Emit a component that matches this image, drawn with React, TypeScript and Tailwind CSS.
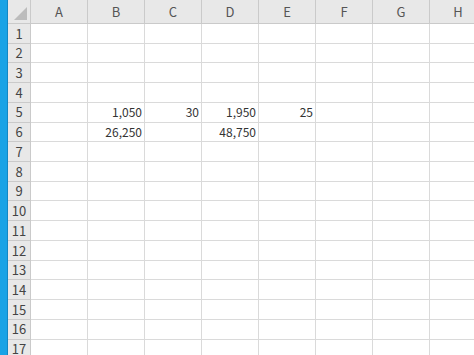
import React from "react";

const cols = ["A", "B", "C", "D", "E", "F", "G", "H"];
const data: Record<string, string> = {
  "5B": "1,050",
  "5C": "30",
  "5D": "1,950",
  "5E": "25",
  "6B": "26,250",
  "6D": "48,750",
};

export default function App() {
  const rows = Array.from({ length: 17 }, (_, i) => i + 1);
  return (
    <div
      className="w-[474px] h-[355px] overflow-hidden flex bg-white"
      style={{ fontFamily: '"Noto Sans CJK JP", "Noto Sans", sans-serif' }}
    >
      <div className="w-[8px] shrink-0 bg-[#19a3e6] border-r border-[#1287c4]" />
      <div className="flex flex-col shrink-0">
        <div className="flex h-[24px] shrink-0">
          <div className="w-[23px] h-full bg-[#e8e8e8] border-r border-b border-[#cacaca] relative">
            <svg className="absolute right-[3px] bottom-[3px]" width="13" height="13" viewBox="0 0 13 13">
              <polygon points="13,0 13,13 0,13" fill="#bcbcbc" />
            </svg>
          </div>
          {cols.map((c) => (
            <div
              key={c}
              className="w-[57px] shrink-0 h-full bg-[#e8e8e8] border-r border-b border-[#cacaca] flex items-center justify-center text-[13px] text-[#555]"
            >
              {c}
            </div>
          ))}
        </div>
        {rows.map((r) => (
          <div key={r} className="flex h-[19.73px] shrink-0">
            <div className="w-[23px] h-full bg-[#e8e8e8] border-r border-b border-[#cacaca] flex items-center justify-center text-[13px] text-[#444]">
              {r}
            </div>
            {cols.map((c) => (
              <div
                key={c}
                className="w-[57px] shrink-0 h-full border-r border-b border-[#dadada] flex items-center justify-end pr-[2px] text-[12px] text-[#333]"
              >
                {data[`${r}${c}`] ?? ""}
              </div>
            ))}
          </div>
        ))}
      </div>
    </div>
  );
}
